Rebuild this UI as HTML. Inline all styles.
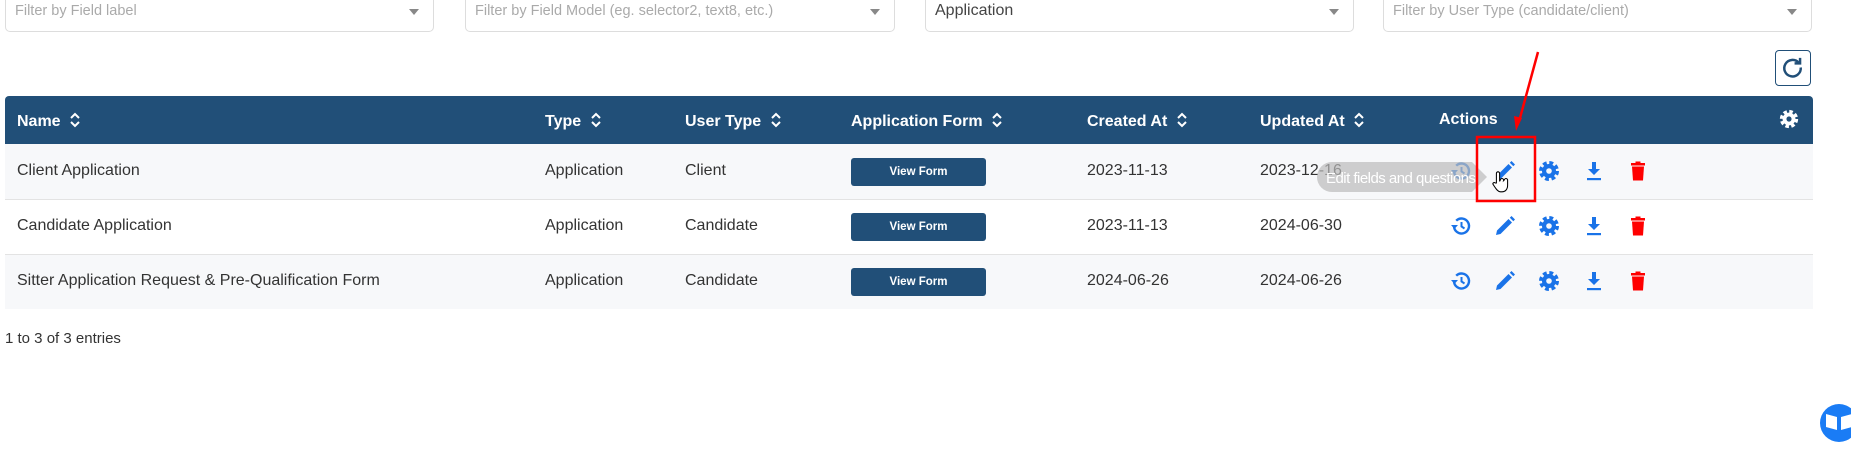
<!DOCTYPE html>
<html><head><meta charset="utf-8"><style>
body{margin:0;width:1851px;height:454px;background:#fff;position:relative;overflow:hidden;font-family:"Liberation Sans",sans-serif;color:#222}
.f{position:absolute;top:-10px;height:42px;border:1px solid #ddd;border-radius:5px;background:#fff;box-sizing:border-box}
.f span{position:absolute;left:9px;top:12px;font-size:14.5px;color:#aaa}
.f i{position:absolute;right:14px;top:18px;border-left:5px solid transparent;border-right:5px solid transparent;border-top:6px solid #888}
.hdr{position:absolute;left:5px;top:96px;width:1808px;height:48px;background:#214f78;border-radius:4px 4px 0 0}
.h{position:absolute;top:111px;color:#fff;font-weight:bold;font-size:16px}
.h svg{vertical-align:-3px;margin-left:4px}
.row{position:absolute;left:5px;width:1808px;border-bottom:1px solid #e3e3e3}
.c{position:absolute;font-size:16px;color:#333}
.btn{position:absolute;left:851px;width:135px;height:28px;background:#214f78;color:#fff;font-size:11.5px;font-weight:bold;text-align:center;line-height:28px;border-radius:3px}
.ic{position:absolute;width:22px;height:22px}
</style></head><body>
<div class="f" style="left:5px;width:429px"><span>Filter by Field label</span><i></i></div>
<div class="f" style="left:465px;width:430px"><span>Filter by Field Model (eg. selector2, text8, etc.)</span><i></i></div>
<div class="f" style="left:925px;width:429px"><span style="color:#444;font-size:16px;top:11px">Application</span><i></i></div>
<div class="f" style="left:1383px;width:429px"><span>Filter by User Type (candidate/client)</span><i></i></div>
<div style="position:absolute;left:1775px;top:50px;width:36px;height:36px;border:1.5px solid #214f78;border-radius:4px;box-sizing:border-box">
<svg width="33" height="33" viewBox="0 0 24 24" style="position:absolute;left:0;top:0"><path d="M16.5 8.5A6 6 0 1 0 18 12" fill="none" stroke="#214f78" stroke-width="1.8"/><path d="M17.5 5v4h-4" fill="none" stroke="#214f78" stroke-width="1.8"/></svg></div>
<svg width="0" height="0" style="position:absolute"><defs>
<g id="srt"><path d="M2 7l4-4 4 4M2 11l4 4 4-4" fill="none" stroke="#fff" stroke-width="2"/></g>
</defs></svg>
<div class="hdr"></div>
<div class="h" style="left:17px">Name <svg width="12" height="18"><use href="#srt"/></svg></div>
<div class="h" style="left:545px">Type <svg width="12" height="18"><use href="#srt"/></svg></div>
<div class="h" style="left:685px">User Type <svg width="12" height="18"><use href="#srt"/></svg></div>
<div class="h" style="left:851px">Application Form <svg width="12" height="18"><use href="#srt"/></svg></div>
<div class="h" style="left:1087px">Created At <svg width="12" height="18"><use href="#srt"/></svg></div>
<div class="h" style="left:1260px">Updated At <svg width="12" height="18"><use href="#srt"/></svg></div>
<div class="h" style="left:1439px">Actions</div>
<svg class="ic" style="left:1778px;top:108px" viewBox="0 0 24 24"><circle cx="12" cy="12" r="7.5" fill="none" stroke="#fff" stroke-width="5" stroke-dasharray="3.5 2.4"/><circle cx="12" cy="12" r="7" fill="#fff"/><circle cx="12" cy="12" r="2.8" fill="#214f78"/></svg>
<div class="row" style="top:144px;height:55px;background:#f7f8fa"></div>
<div class="row" style="top:200px;height:54px;background:#fff"></div>
<div class="row" style="top:255px;height:54px;background:#f7f8fa;border:0"></div>

<div class="c" style="left:17px;top:162px">Client Application</div>
<div class="c" style="left:545px;top:162px">Application</div>
<div class="c" style="left:685px;top:162px">Client</div>
<div class="btn" style="top:158px">View Form</div>
<div class="c" style="left:1087px;top:162px">2023-11-13</div>
<div class="c" style="left:1260px;top:162px">2023-12-16</div>

<div class="c" style="left:17px;top:217px">Candidate Application</div>
<div class="c" style="left:545px;top:217px">Application</div>
<div class="c" style="left:685px;top:217px">Candidate</div>
<div class="btn" style="top:213px">View Form</div>
<div class="c" style="left:1087px;top:217px">2023-11-13</div>
<div class="c" style="left:1260px;top:217px">2024-06-30</div>

<div class="c" style="left:17px;top:272px">Sitter Application Request &amp; Pre-Qualification Form</div>
<div class="c" style="left:545px;top:272px">Application</div>
<div class="c" style="left:685px;top:272px">Candidate</div>
<div class="btn" style="top:268px">View Form</div>
<div class="c" style="left:1087px;top:272px">2024-06-26</div>
<div class="c" style="left:1260px;top:272px">2024-06-26</div>

<svg width="0" height="0" style="position:absolute"><defs>
<g id="hist"><path d="M5 12a7.5 7.5 0 1 0 2.2-5.3" fill="none" stroke="#1a73e8" stroke-width="2.4"/><path d="M2 11l3.5 4 3.5-4z" fill="#1a73e8"/><path d="M12.5 8v4.5l3 2" fill="none" stroke="#1a73e8" stroke-width="2"/></g>
<g id="pen"><path d="M3 21l1-4.5L15.5 5l3.5 3.5L7.5 20z" fill="#1a73e8"/><path d="M16.8 3.7l1.7-1.7 3.5 3.5-1.7 1.7z" fill="#1a73e8"/></g>
<g id="gear"><circle cx="12" cy="12" r="7.5" fill="none" stroke="#1a73e8" stroke-width="5" stroke-dasharray="3.5 2.4"/><circle cx="12" cy="12" r="7" fill="#1a73e8"/><circle cx="12" cy="12" r="2.8" fill="#f7f8fa"/></g>
<g id="dl"><path d="M10 3h4v7h4l-6 6-6-6h4z" fill="#1a73e8"/><rect x="5" y="19" width="14" height="2.2" fill="#1a73e8"/></g>
<g id="tr"><rect x="5" y="4" width="14" height="2.5" fill="#f00"/><rect x="9.5" y="2.5" width="5" height="2" fill="#f00"/><path d="M6 7.5h12l-1 14H7z" fill="#f00"/></g>
</defs></svg>
<svg style="position:absolute;left:0;top:0" width="1851" height="454">
<g transform="translate(1449,159)"><use href="#hist"/></g><g transform="translate(1537,159)"><use href="#gear"/></g><g transform="translate(1582,159)"><use href="#dl"/></g><g transform="translate(1626,159)"><use href="#tr"/></g>
<g transform="translate(1449,214)"><use href="#hist"/></g><g transform="translate(1493,214)"><use href="#pen"/></g><g transform="translate(1537,214)"><use href="#gear"/></g><g transform="translate(1582,214)"><use href="#dl"/></g><g transform="translate(1626,214)"><use href="#tr"/></g>
<g transform="translate(1449,269)"><use href="#hist"/></g><g transform="translate(1493,269)"><use href="#pen"/></g><g transform="translate(1537,269)"><use href="#gear"/></g><g transform="translate(1582,269)"><use href="#dl"/></g><g transform="translate(1626,269)"><use href="#tr"/></g>
<path d="M1317 177a15 15 0 0 1 15-15h140l10 10 5 5-5 5-10 10h-140a15 15 0 0 1-15-15z" fill="#bbb" opacity="0.7"/>
<text x="1326" y="183" font-family="Liberation Sans" font-size="15" fill="#fff" textLength="150">Edit fields and questions</text>
<g transform="translate(1493,159)"><use href="#pen"/></g>
<rect x="1477" y="137" width="58" height="64" fill="none" stroke="#f00" stroke-width="2.5"/>
<line x1="1538" y1="52" x2="1520" y2="118" stroke="#f00" stroke-width="2.5"/>
<path d="M1514 116l8 2 -6 13z" fill="#f00"/>
<g transform="translate(1494,175) scale(0.8)"><path d="M3 10v-12a2 2 0 0 1 4 0v10l1-2a2 2 0 0 1 4 1l1-1a2 2 0 0 1 4 1v6c0 5-3 8-7 8h-2c-3 0-5-3-7-6l-2-3a1.5 1.5 0 0 1 2.5-2z" fill="#fff" stroke="#000" stroke-width="1.3"/></g>
<circle cx="1839" cy="423" r="19" fill="#1a7cf5"/>
<path d="M1826 414l11 3v13l-11-3zM1852 414l-11 3v13l11-3z" fill="#fff"/>
</svg>
<div class="c" style="left:5px;top:330px;font-size:15px">1 to 3 of 3 entries</div>
</body></html>
